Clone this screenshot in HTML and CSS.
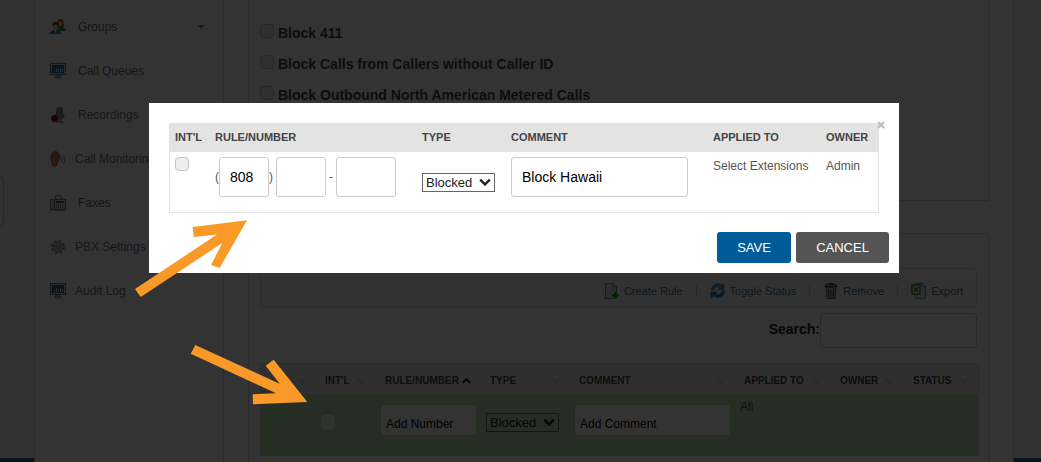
FILE: index.html
```
<!DOCTYPE html>
<html lang="en">
<head>
  <meta charset="UTF-8">
  <meta name="viewport" content="width=device-width, initial-scale=1.0">
  <title>Call Blocking</title>
  <link rel="stylesheet" href="styles.css">
</head>
<body>
  <svg class="defs" width="0" height="0">
    <symbol id="monitor" viewBox="0 0 16 16">
      <rect x="0.5" y="0.5" width="15" height="11" fill="#ddd" stroke="#777"/>
      <rect x="2" y="2" width="12" height="8" fill="#1668a4"/>
      <path d="M4.500 9V7M6.500 9V5M8.500 9V6M10.500 9V5M12.500 9V6" stroke="#cfeaff"/>
      <path d="M6 12h4v1h1v2H5v-2h1z" fill="#aaa" stroke="#777" stroke-width="0.5"/>
    </symbol>
    <symbol id="chevron" viewBox="0 0 10 6">
      <path d="M1 1l4 4 4-4" fill="none" stroke="currentColor" stroke-width="2"/>
    </symbol>
  </svg>

  <div class="side-tab"></div>

  <div class="container">
    <nav class="sidebar">
      <ul>
        <li><a href="#">
          <svg class="icon" viewBox="0 0 16 16">
            <path d="M7 12c0-3 2-4 4-4s5 1 5 4z" fill="#2c8a60"/>
            <path d="M7.500 8V3c0-4 6-4 6 0v5z" fill="#8a4a24"/>
            <ellipse cx="10.500" cy="4.500" rx="1.700" ry="2.700" fill="#eebf98"/>
            <path d="M0 15c0-3 2-4 5-4s6 1 6 4z" fill="#3a78b8"/>
            <path d="M4.500 11h2l-1 4z" fill="#fff"/>
            <ellipse cx="5.500" cy="7.500" rx="2.500" ry="3.500" fill="#eebf98"/>
            <path d="M2.500 7.500c-0.500-6 6.500-6 6 0L7 5.500H4z" fill="#3c2416"/>
          </svg>
          <span>Groups</span>
          <i class="caret"></i>
        </a></li>
        <li><a href="#">
          <svg class="icon"><use href="#monitor"/></svg>
          <span>Call Queues</span>
        </a></li>
        <li><a href="#">
          <svg class="icon" viewBox="0 0 16 16">
            <rect x="6.500" y="0.500" width="6" height="10" rx="3" fill="#aaa" stroke="#777"/>
            <path d="M6.500 4h6M6.500 6h6M8.500 1v8M10.500 1v8" stroke="#666" stroke-width="0.500"/>
            <path d="M5 7c0 7 9 7 9 0M9.500 12v3M6 15h7" fill="none" stroke="#888" stroke-width="1.500"/>
            <circle cx="4.500" cy="11.500" r="3.500" fill="#b00d14"/>
          </svg>
          <span>Recordings</span>
        </a></li>
        <li class="tight"><a href="#">
          <svg class="icon" viewBox="0 0 16 16">
            <path d="M1 6c0-7 9-7 9 0 0 4-3 4-3 7 0 3-5 3-5 0z" fill="#d0965a" stroke="#8a5c30"/>
            <path d="M3.500 6c0-4 4-4 4 0 0 2-2 2-2 4" fill="none" stroke="#8a5c30"/>
            <path d="M11.500 6q2 2.500 0 5M13.500 4q3 4.500 0 9" fill="none" stroke="#888"/>
          </svg>
          <span>Call Monitoring</span>
        </a></li>
        <li><a href="#">
          <svg class="icon" viewBox="0 0 16 16">
            <rect x="0.500" y="4.500" width="4" height="10" fill="#ccc" stroke="#777"/>
            <path d="M5.500 4.500v-4h6v4" fill="#eee" stroke="#888"/>
            <rect x="4.500" y="4.500" width="11" height="10" fill="#ddd" stroke="#777"/>
            <rect x="6" y="6" width="8" height="2" fill="#1668a4"/>
            <path d="M6 10h8M6 12h8" stroke="#555" stroke-dasharray="1 1"/>
            <path d="M5 15.500h10" stroke="#888"/>
          </svg>
          <span>Faxes</span>
        </a></li>
        <li class="tight"><a href="#">
          <svg class="icon" viewBox="0 0 16 16">
            <circle cx="8" cy="8" r="6" fill="none" stroke="#888" stroke-width="2" stroke-dasharray="2.700 2"/>
            <circle cx="8" cy="8" r="4.500" fill="#ddd" stroke="#888"/>
            <circle cx="8" cy="8" r="3" fill="none" stroke="#aaa" stroke-dasharray="2 1"/>
            <circle cx="8" cy="8" r="1.500" fill="#fff" stroke="#777"/>
          </svg>
          <span>PBX Settings</span>
        </a></li>
        <li class="tight"><a href="#">
          <svg class="icon"><use href="#monitor"/></svg>
          <span>Audit Log</span>
        </a></li>
      </ul>
    </nav>

    <main>
      <section class="panel options">
        <div class="option"><input type="checkbox" id="block-411"><label for="block-411">Block 411</label></div>
        <div class="option"><input type="checkbox" id="block-noid"><label for="block-noid">Block Calls from Callers without Caller ID</label></div>
        <div class="option"><input type="checkbox" id="block-metered"><label for="block-metered">Block Outbound North American Metered Calls</label></div>
      </section>

      <section class="panel rules">
        <div class="toolbar">
          <a href="#">
            <svg class="icon" viewBox="0 0 16 16">
              <path d="M1.500 0.500h8l3 3v12h-11z" fill="#d8ecf8" stroke="#5f92b4"/>
              <path d="M9.500 0.500v3h3" fill="#fff" stroke="#5f92b4"/>
              <path d="M11.500 9v6.500M8 12.500h7" stroke="#0b9a14" stroke-width="2.500"/>
            </svg>
            Create Rule</a>
          <a href="#">
            <svg class="icon" viewBox="0 0 16 16">
              <path d="M1 7c1-6 7-8 11-5l2-1v6H8l2-2c-3-2-5-1-6 2z" fill="#5a9bcc" stroke="#2a6fa8" stroke-width="0.500"/>
              <path d="M15 8c-1 6-7 8-11 5l-3 2V9h6l-1 2c2 1 5 0 6-3z" fill="#347bb4" stroke="#2a6fa8" stroke-width="0.500"/>
            </svg>
            Toggle Status</a>
          <a href="#">
            <svg class="icon" viewBox="0 0 16 16">
              <path d="M3 4h10l-1 11.500H4z" fill="#bbb" stroke="#555"/>
              <path d="M5.500 6l0.500 8M8 6v8M10.500 6l-0.500 8" stroke="#555"/>
              <path d="M2 3.500q0-2 2-2h8q2 0 2 2zM6 1.500v-1h4v1" fill="#999" stroke="#444"/>
            </svg>
            Remove</a>
          <a href="#">
            <svg class="icon" viewBox="0 0 16 16">
              <path d="M4.500 0.500h7l3 3v12h-10z" fill="#d8ecf8" stroke="#5f92b4"/>
              <path d="M11.500 0.500v3h3" fill="#fff" stroke="#5f92b4"/>
              <rect x="1" y="2" width="8" height="9" fill="#e4f2d2" stroke="#4a8a1c" stroke-width="1.500"/>
              <path d="M3 4.500l4 4M7 4.500l-4 4" stroke="#2f7a10" stroke-width="1.500"/>
            </svg>
            Export</a>
        </div>

        <div class="search">
          <label for="search">Search:</label>
          <input type="text" id="search">
        </div>

        <table class="rule-list">
          <colgroup>
            <col class="c-pick"><col class="c-intl"><col class="c-rule"><col class="c-type">
            <col class="c-comment"><col class="c-applied"><col class="c-owner"><col>
          </colgroup>
          <thead>
            <tr>
              <th><div><span></span><svg><use href="#chevron"/></svg></div></th>
              <th><div>INT'L <svg><use href="#chevron"/></svg></div></th>
              <th class="sorted"><div>RULE/NUMBER <svg><use href="#chevron"/></svg></div></th>
              <th><div>TYPE <svg><use href="#chevron"/></svg></div></th>
              <th><div>COMMENT <svg><use href="#chevron"/></svg></div></th>
              <th><div>APPLIED TO <svg><use href="#chevron"/></svg></div></th>
              <th><div>OWNER <svg><use href="#chevron"/></svg></div></th>
              <th><div>STATUS <svg><use href="#chevron"/></svg></div></th>
            </tr>
          </thead>
          <tbody>
            <tr>
              <td></td>
              <td class="check"><input type="checkbox" aria-label="International"></td>
              <td class="field"><input type="text" value="Add Number" aria-label="Number"></td>
              <td class="pick">
                <div class="select">
                  <select aria-label="Type"><option>Blocked</option><option>Allowed</option></select>
                  <svg><use href="#chevron"/></svg>
                </div>
              </td>
              <td class="field"><input type="text" value="Add Comment" aria-label="Comment"></td>
              <td class="all">All</td>
              <td></td>
              <td></td>
            </tr>
          </tbody>
        </table>
      </section>
    </main>
  </div>

  <div class="overlay">
    <div class="modal" role="dialog">
      <button type="button" class="close" aria-label="Close">
        <svg viewBox="0 0 8 8"><path d="M1 1l6 6M7 1l-6 6" stroke="#bbb" stroke-width="2"/></svg>
      </button>
      <table class="edit-rule">
        <colgroup>
          <col class="m-intl"><col class="m-rule"><col class="m-type"><col class="m-comment"><col class="m-applied"><col>
        </colgroup>
        <thead>
          <tr>
            <th>INT'L</th>
            <th>RULE/NUMBER</th>
            <th>TYPE</th>
            <th>COMMENT</th>
            <th>APPLIED TO</th>
            <th>OWNER</th>
          </tr>
        </thead>
        <tbody>
          <tr>
            <td><input type="checkbox" aria-label="International"></td>
            <td>
              <div class="number">
                (<input type="text" value="808" aria-label="Area code">)
                <input type="text" aria-label="Prefix">
                -
                <input type="text" class="line" aria-label="Line number">
              </div>
            </td>
            <td class="pick">
              <div class="select">
                <select aria-label="Type"><option>Blocked</option><option>Allowed</option></select>
                <svg><use href="#chevron"/></svg>
              </div>
            </td>
            <td><input type="text" class="comment" value="Block Hawaii" aria-label="Comment"></td>
            <td class="text">Select Extensions</td>
            <td class="text">Admin</td>
          </tr>
        </tbody>
      </table>
      <div class="actions">
        <button type="button" class="save">SAVE</button>
        <button type="button" class="cancel">CANCEL</button>
      </div>
    </div>
  </div>

  <svg class="arrows" viewBox="130 215 180 195">
    <polygon points="135,289 217,234.500 193.700,237 192.700,227 247,220.300 219.700,268 211,265 222.300,243 140.700,297"/>
    <polygon points="195.300,345 279.700,383.700 265.700,365.700 273.700,359.700 307.300,402 253,404.300 252.700,394.300 276,393.300 190.700,353.700"/>
  </svg>
</body>
</html>
```
FILE: styles.css
```
* {
  box-sizing: border-box;
}

body {
  margin: 0;
  padding-left: 7px;
  min-height: 100vh;
  display: flex;
  font-family: "Liberation Sans", Arial, sans-serif;
  font-size: 12px;
  color: #555;
  background: linear-gradient(#0a5a96, #0a5a96) bottom / 100% 4px no-repeat #f8f8f8;
}

a {
  text-decoration: none;
}

input,
select,
button {
  font-family: inherit;
  margin: 0;
}

input[type="text"] {
  border: 1px solid #ccc;
  border-radius: 3px;
  background: #fff;
  color: #000;
}

input[type="checkbox"] {
  appearance: none;
  width: 14px;
  height: 14px;
  border: 1px solid #c4c4c4;
  border-radius: 4px;
  background: #eee;
  display: block;
  flex: none;
}

.defs {
  position: absolute;
}

.icon {
  width: 16px;
  height: 16px;
  flex: none;
}

.side-tab {
  position: absolute;
  left: -4px;
  top: 176px;
  width: 8px;
  height: 51px;
  border: 1px solid #ccc;
  border-radius: 4px;
}

.container {
  flex: 1;
  display: flex;
  margin: 0 27px;
  background: #fff;
  border: 1px solid #d8d8d8;
  border-width: 0 1px;
}

/* sidebar */
.sidebar {
  width: 189px;
  flex: none;
  border-right: 1px solid #d8d8d8;
}

.sidebar ul {
  list-style: none;
  margin: 0;
  padding: 5px 0 0;
}

.sidebar a {
  display: flex;
  align-items: center;
  gap: 12px;
  height: 44px;
  padding: 0 18px 0 15px;
  color: #667080;
  white-space: nowrap;
}

.sidebar .tight a {
  gap: 9px;
}

.caret {
  margin-left: auto;
  border: 4px solid transparent;
  border-top-color: #8296a4;
  border-bottom: 0;
}

/* main column */
main {
  flex: 1;
  display: flex;
  flex-direction: column;
  margin: 0 24px;
}

.panel {
  border: 1px solid #d4d4d4;
  padding: 0 11px;
}

.options {
  border-top: 0;
  padding-top: 16px;
  padding-bottom: 91px;
  margin-bottom: 32px;
}

.option {
  display: flex;
  gap: 4px;
  height: 31px;
  padding-top: 8px;
  font-size: 14px;
  line-height: 18px;
  font-weight: bold;
  color: #444;
}

.rules {
  flex: 1;
  border-bottom: 0;
  padding-top: 34px;
}

.toolbar {
  display: flex;
  justify-content: flex-end;
  align-items: center;
  height: 40px;
  padding-right: 13px;
  margin-bottom: 5px;
  border: 1px solid #dcdcdc;
  border-radius: 3px;
  background: linear-gradient(#fff 25%, #f8f8f8 25%);
}

.toolbar a {
  display: flex;
  align-items: center;
  gap: 4px;
  padding-top: 5px;
  font-size: 11px;
  color: #38749f;
}

.toolbar a + a::before {
  content: "";
  height: 13px;
  border-left: 1px solid #ccc;
  margin: 0 9px 0 13px;
}

.search {
  display: flex;
  justify-content: flex-end;
  align-items: center;
  margin-bottom: 15px;
  font-size: 14px;
  font-weight: bold;
  color: #222;
}

.search input {
  width: 157px;
  height: 35px;
}

.search label {
  padding-bottom: 3px;
}

table {
  width: 100%;
  table-layout: fixed;
  border-spacing: 0;
}

th {
  text-align: left;
  padding: 0 5px;
}

td {
  vertical-align: top;
  padding: 5px 5px 0;
}

/* the list is a little wider than the toolbar above it */
.rule-list {
  width: calc(100% + 2px);
  border: 1px solid #d8d8d8;
}

.c-pick { width: 59px; }
.c-intl { width: 60px; }
.c-rule { width: 105px; }
.c-type { width: 89px; }
.c-comment { width: 165px; }
.c-applied { width: 96px; }
.c-owner { width: 73px; }

.rule-list th {
  height: 31px;
  font-size: 10px;
  color: #444;
  background: #e9e9e9;
  padding-right: 14px;
}

.rule-list th:last-child {
  padding-right: 10px;
}

.rule-list th div {
  display: flex;
  justify-content: space-between;
  align-items: center;
  padding-top: 2px;
  white-space: nowrap;
}

.rule-list th svg {
  width: 9px;
  height: 6px;
  color: #ccc;
}

.rule-list .sorted svg {
  color: #000;
  transform: rotate(180deg);
}

.rule-list td {
  height: 60px;
  background: #bedfac;
}

.rule-list td.all {
  padding-left: 1px;
}

.rule-list td.field {
  padding: 10px 9px 0 1px;
}

.rule-list .field input {
  width: 100%;
  height: 30px;
  padding: 7px 4px 0;
  border-color: #fff;
  font-size: 12px;
}

.rule-list td.check {
  padding: 20px 0 0 1px;
}

.check input[type="checkbox"] {
  border-color: #fff;
  background: #f8f8f8;
}

.rule-list td.pick {
  padding: 18px 0 0 1px;
}

.select {
  position: relative;
  width: 73px;
}

.select select {
  appearance: none;
  display: block;
  width: 100%;
  height: 19px;
  padding: 0 3px;
  border: 1px solid #666;
  border-radius: 0;
  background: #fff;
  color: #222;
  font-size: 13px;
}

.select svg {
  position: absolute;
  right: 4px;
  top: 5px;
  width: 12px;
  height: 8px;
  color: #222;
  pointer-events: none;
}

.rule-list .select select {
  background: transparent;
}

/* modal */
.overlay {
  position: fixed;
  inset: 0;
  padding: 103px 0 0 7px;
  background: rgba(0, 0, 0, 0.8);
}

.modal {
  position: relative;
  width: 750px;
  max-width: 100%;
  margin: 0 auto;
  padding: 20px 10px 10px 20px;
  background: #fff;
}

.close {
  position: absolute;
  right: 14px;
  top: 18px;
  padding: 0;
  border: 0;
  background: none;
  line-height: 0;
}

.close svg {
  width: 8px;
  height: 8px;
}

.edit-rule {
  width: calc(100% - 10px);
  border: 1px solid #e3e3e3;
  margin-bottom: 19px;
}

.m-intl { width: 40px; }
.m-rule { width: 207px; }
.m-type { width: 89px; }
.m-comment { width: 202px; }
.m-applied { width: 113px; }

.edit-rule th {
  height: 28px;
  padding-bottom: 2px;
  font-size: 11px;
  color: #444;
  background: #e3e3e3;
}

.edit-rule td {
  height: 60px;
}

.edit-rule td.text {
  padding-top: 7px;
}

.edit-rule td.pick {
  padding-top: 21px;
}

.number {
  display: flex;
  align-items: center;
  gap: 3px;
}

.number,
.comment {
  height: 40px;
}

.edit-rule input[type="text"] {
  height: 40px;
  padding: 0 10px;
  font-size: 14px;
}

.number input {
  width: 50px;
}

.number input:first-child {
  margin: 0 -3px;
}

.number .line {
  width: 60px;
}

.edit-rule .comment {
  width: 177px;
}

.actions {
  display: flex;
  justify-content: flex-end;
  gap: 5px;
}

.actions button {
  height: 31px;
  border: 0;
  border-radius: 3px;
  color: #fff;
  font-size: 13px;
}

.save {
  width: 74px;
  background: #005b99;
}

.cancel {
  width: 93px;
  background: #555;
}

/* callout arrows lie over the whole page */
.arrows {
  position: absolute;
  left: 130px;
  top: 215px;
  width: 180px;
  height: 195px;
  fill: #f99a28;
  pointer-events: none;
}
```
